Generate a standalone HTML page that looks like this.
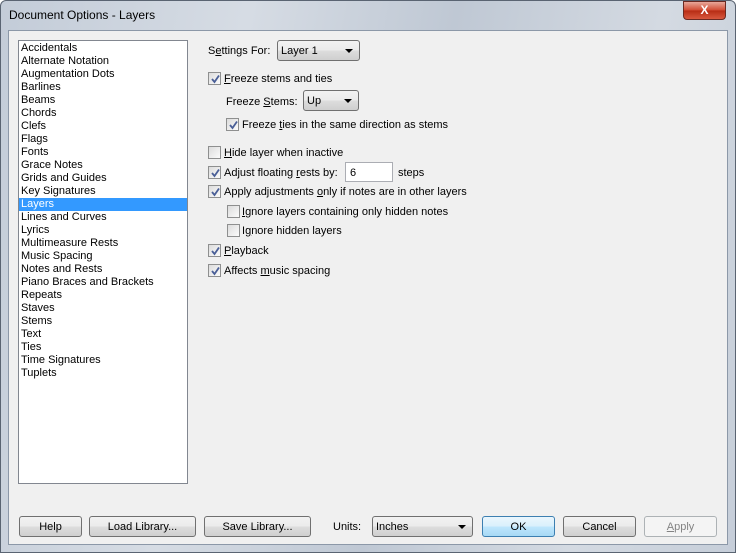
<!DOCTYPE html>
<html><head><style>
*{margin:0;padding:0;box-sizing:border-box}
body{width:736px;height:553px;overflow:hidden;background:#fff;font-family:"Liberation Sans",sans-serif;font-size:11px;color:#000;position:relative}
.frame{position:absolute;left:0;top:0;width:736px;height:553px;background:linear-gradient(100deg,#c3ccd8 0%,#d6dce4 30%,#bfc8d4 55%,#d4dae2 80%,#c6ced9 100%);border:1px solid #5a6472;border-radius:6px 6px 0 0}
.title{position:absolute;left:9px;top:8px;font-size:12px;color:#000}
.close{position:absolute;left:683px;top:1px;width:43px;height:19px;border:1px solid #6b2a22;border-radius:0 0 4px 4px;background:linear-gradient(#e8a89a,#d0482f 50%,#b62c14 51%,#d8583e);color:#fff;font-weight:bold;font-size:12px;text-align:center;line-height:17px}
.client{position:absolute;left:8px;top:30px;width:720px;height:515px;background:#f0f0f0;border:1px solid #8c98a8}
.abs{position:absolute;white-space:nowrap}
.t{margin-top:1px}
.list{position:absolute;left:18px;top:40px;width:170px;height:444px;background:#fff;border:1px solid #828790;padding-top:1px}
.list div{height:13px;line-height:13px;padding-left:2px}
.list .sel{background:#3399ff;color:#fff}
.cb{position:absolute;width:13px;height:13px;border:1px solid #8e8f8f;background:linear-gradient(135deg,#dcdcdc,#fbfbfb)}
.cb svg{position:absolute;left:1px;top:1px}
.combo{position:absolute;height:21px;border:1px solid #707070;border-radius:3px;background:linear-gradient(#f2f2f2,#ebebeb 50%,#dddddd 51%,#cfcfcf);padding-left:3px;line-height:21px}
.combo:after{content:"";position:absolute;right:6px;top:8px;border-left:4px solid transparent;border-right:4px solid transparent;border-top:4px solid #000}
.btn{position:absolute;top:516px;height:21px;border:1px solid #707070;border-radius:3px;background:linear-gradient(#f2f2f2,#ebebeb 50%,#dddddd 51%,#cfcfcf);text-align:center;line-height:21px}
u{text-decoration:underline}
</style></head><body>
<div class="frame"></div>
<div class="title">Document Options - Layers</div>
<div class="close">X</div>
<div class="client"></div>
<div class="list">
<div>Accidentals</div><div>Alternate Notation</div><div>Augmentation Dots</div><div>Barlines</div><div>Beams</div><div>Chords</div><div>Clefs</div><div>Flags</div><div>Fonts</div><div>Grace Notes</div><div>Grids and Guides</div><div>Key Signatures</div><div class="sel">Layers</div><div>Lines and Curves</div><div>Lyrics</div><div>Multimeasure Rests</div><div>Music Spacing</div><div>Notes and Rests</div><div>Piano Braces and Brackets</div><div>Repeats</div><div>Staves</div><div>Stems</div><div>Text</div><div>Ties</div><div>Time Signatures</div><div>Tuplets</div>
</div>

<div class="abs" style="left:208px;top:45px">S<u>e</u>ttings For:</div>
<div class="combo" style="left:277px;top:40px;width:83px">Layer 1</div>

<div class="cb" style="left:208px;top:72px"><svg width="11" height="11"><path d="M2 5 L4.5 8 L9 1.5" stroke="#4a5f97" stroke-width="1.8" fill="none"/></svg></div>
<div class="abs" style="left:224px;top:73px"><u>F</u>reeze stems and ties</div>
<div class="abs" style="left:226px;top:96px">Freeze <u>S</u>tems:</div>
<div class="combo" style="left:303px;top:90px;width:56px">Up</div>
<div class="cb" style="left:226px;top:118px"><svg width="11" height="11"><path d="M2 5 L4.5 8 L9 1.5" stroke="#4a5f97" stroke-width="1.8" fill="none"/></svg></div>
<div class="abs" style="left:242px;top:119px">Freeze <u>t</u>ies in the same direction as stems</div>

<div class="cb" style="left:208px;top:146px"></div>
<div class="abs" style="left:224px;top:147px"><u>H</u>ide layer when inactive</div>
<div class="cb" style="left:208px;top:166px"><svg width="11" height="11"><path d="M2 5 L4.5 8 L9 1.5" stroke="#4a5f97" stroke-width="1.8" fill="none"/></svg></div>
<div class="abs" style="left:224px;top:167px">Adjust floating <u>r</u>ests by:</div>
<div class="abs" style="left:345px;top:162px;width:48px;height:20px;background:#fff;border:1px solid #abadb3;padding:4px 0 0 4px">6</div>
<div class="abs" style="left:398px;top:167px">steps</div>
<div class="cb" style="left:208px;top:185px"><svg width="11" height="11"><path d="M2 5 L4.5 8 L9 1.5" stroke="#4a5f97" stroke-width="1.8" fill="none"/></svg></div>
<div class="abs" style="left:224px;top:186px">Apply adjustments <u>o</u>nly if notes are in other layers</div>
<div class="cb" style="left:227px;top:205px"></div>
<div class="abs" style="left:242px;top:206px"><u>I</u>gnore layers containing only hidden notes</div>
<div class="cb" style="left:227px;top:224px"></div>
<div class="abs" style="left:242px;top:225px">I<u>g</u>nore hidden layers</div>
<div class="cb" style="left:208px;top:244px"><svg width="11" height="11"><path d="M2 5 L4.5 8 L9 1.5" stroke="#4a5f97" stroke-width="1.8" fill="none"/></svg></div>
<div class="abs" style="left:224px;top:245px"><u>P</u>layback</div>
<div class="cb" style="left:208px;top:264px"><svg width="11" height="11"><path d="M2 5 L4.5 8 L9 1.5" stroke="#4a5f97" stroke-width="1.8" fill="none"/></svg></div>
<div class="abs" style="left:224px;top:265px">Affects <u>m</u>usic spacing</div>

<div class="btn" style="left:19px;width:63px">Help</div>
<div class="btn" style="left:89px;width:107px">Load Library...</div>
<div class="btn" style="left:204px;width:107px">Save Library...</div>
<div class="abs" style="left:333px;top:521px">Units:</div>
<div class="combo" style="left:372px;top:516px;width:101px">Inches</div>
<div class="btn" style="left:482px;width:73px;border-color:#3c7fb1;background:linear-gradient(#eaf6fd,#d9f0fc 50%,#bee6fd 51%,#a7d9f5)">OK</div>
<div class="btn" style="left:563px;width:73px">Cancel</div>
<div class="btn" style="left:644px;width:73px;border-color:#adb2b5;background:#f4f4f4;color:#838383"><u>A</u>pply</div>
</body></html>
